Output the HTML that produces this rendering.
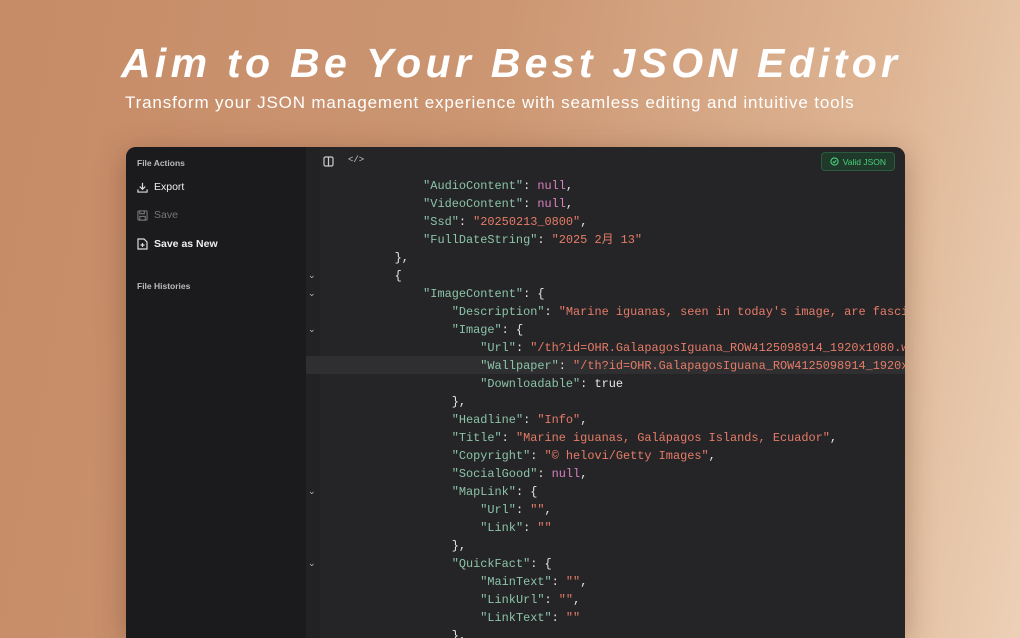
<!DOCTYPE html>
<html><head><meta charset="utf-8"><style>
*{margin:0;padding:0;box-sizing:border-box}
html{overflow:hidden;width:1020px;height:638px}
body{width:1020px;height:638px;overflow:hidden;position:relative;background:linear-gradient(100deg,#c68b67 0%,#cc9672 45%,#deb594 80%,#ecd0b6 100%);font-family:"Liberation Sans",sans-serif}
.title{position:absolute;left:121px;top:40px;font-size:41px;font-weight:bold;font-style:italic;color:#fff;letter-spacing:4.3px;white-space:nowrap}
.sub{position:absolute;left:125px;top:93px;font-size:17px;color:#fff;white-space:nowrap;letter-spacing:0.85px}
.win{position:absolute;left:126px;top:147px;width:779px;height:491px;border-radius:10px 10px 0 0;overflow:hidden;background:#252527;box-shadow:0 6px 30px rgba(80,40,20,.35)}
.side{position:absolute;left:0;top:0;width:180px;height:100%;background:#1b1b1d}
.side .h{position:absolute;left:11px;font-size:8.5px;color:#bbb;font-weight:bold}
.side .it{position:absolute;left:11px;font-size:10.5px;color:#eee;display:flex;align-items:center;gap:6px}
.ed{position:absolute;left:180px;top:0;right:0;bottom:0;background:#252527}
.gut{position:absolute;left:0;top:0;width:14px;height:100%;background:#222224}
.hl{position:absolute;left:0;right:0;top:209px;height:18px;background:#2f2f31}
.code{position:absolute;left:3px;top:1px;font-family:"Liberation Mono","Noto Sans CJK SC",monospace;font-size:11.9px;color:#e6e6e6;white-space:pre}
.l{position:absolute;left:0;height:18px;line-height:18px}
.k{color:#8cc4a8}.s{color:#e67c68}.n{color:#d980be}
.chev{position:absolute;left:2px;font-size:9px;color:#bbb}
.valid{position:absolute;right:10px;top:5px;height:19px;padding:0 8px;border-radius:4px;background:#1f3a2b;border:1px solid #2e5a3e;color:#4ad07a;font-size:8.5px;display:flex;align-items:center;gap:4px}
</style></head><body>
<div class="title">Aim to Be Your Best JSON Editor</div>
<div class="sub">Transform your JSON management experience with seamless editing and intuitive tools</div>
<div class="win">
 <div class="side">
  <div class="h" style="top:11px">File Actions</div>
  <div class="it" style="top:34px"><svg width="11" height="11" viewBox="0 0 12 12" fill="none" stroke="#ddd" stroke-width="1.3"><path d="M6 1v7M3 5l3 3 3-3M1 8v3h10V8"/></svg>Export</div>
  <div class="it" style="top:62px;color:#777"><svg width="11" height="11" viewBox="0 0 12 12" fill="none" stroke="#777" stroke-width="1.2"><rect x="1" y="1" width="10" height="10" rx="1"/><rect x="3" y="7" width="6" height="4"/><path d="M3 1v3h5V1"/></svg>Save</div>
  <div class="it" style="top:91px;font-weight:bold"><svg width="11" height="12" viewBox="0 0 11 12" fill="none" stroke="#ddd" stroke-width="1.2"><path d="M1 1h6l3 3v7H1z"/><path d="M5.5 5v4M3.5 7h4"/></svg>Save as New</div>
  <div class="h" style="top:134px">File Histories</div>
 </div>
 <div class="ed">
  <div class="gut"></div>
  <div class="hl"></div>
  <svg style="position:absolute;left:17px;top:9px" width="11" height="11" viewBox="0 0 11 11" fill="none" stroke="#ccc" stroke-width="1.2"><rect x="1" y="1" width="9" height="9" rx="1.5"/><path d="M5.5 1v9"/></svg>
  <div style="position:absolute;left:42px;top:8px;font-size:9px;color:#ccc;font-family:'Liberation Mono',monospace">&lt;/&gt;</div>
  <div class="valid"><svg width="9" height="9" viewBox="0 0 10 10" fill="none" stroke="#4ad07a" stroke-width="1.2"><circle cx="5" cy="5" r="4"/><path d="M3.2 5.2l1.3 1.2 2.3-2.6"/></svg>Valid JSON</div>
  <div class="chev" style="top:123px">⌄</div>
  <div class="chev" style="top:141px">⌄</div>
  <div class="chev" style="top:177px">⌄</div>
  <div class="chev" style="top:339px">⌄</div>
  <div class="chev" style="top:411px">⌄</div>
  <div class="code">
<div class="l" style="top:29px">                <span class="k">"AudioContent"</span>: <span class="n">null</span>,</div>
<div class="l" style="top:47px">                <span class="k">"VideoContent"</span>: <span class="n">null</span>,</div>
<div class="l" style="top:65px">                <span class="k">"Ssd"</span>: <span class="s">"20250213_0800"</span>,</div>
<div class="l" style="top:83px">                <span class="k">"FullDateString"</span>: <span class="s">"2025 2月 13"</span></div>
<div class="l" style="top:101px">            },</div>
<div class="l" style="top:119px">            {</div>
<div class="l" style="top:137px">                <span class="k">"ImageContent"</span>: {</div>
<div class="l" style="top:155px">                    <span class="k">"Description"</span>: <span class="s">"Marine iguanas, seen in today's image, are fascinating</span></div>
<div class="l" style="top:173px">                    <span class="k">"Image"</span>: {</div>
<div class="l" style="top:191px">                        <span class="k">"Url"</span>: <span class="s">"/th?id=OHR.GalapagosIguana_ROW4125098914_1920x1080.webp</span></div>
<div class="l" style="top:209px">                        <span class="k">"Wallpaper"</span>: <span class="s">"/th?id=OHR.GalapagosIguana_ROW4125098914_1920x1080</span></div>
<div class="l" style="top:227px">                        <span class="k">"Downloadable"</span>: true</div>
<div class="l" style="top:245px">                    },</div>
<div class="l" style="top:263px">                    <span class="k">"Headline"</span>: <span class="s">"Info"</span>,</div>
<div class="l" style="top:281px">                    <span class="k">"Title"</span>: <span class="s">"Marine iguanas, Galápagos Islands, Ecuador"</span>,</div>
<div class="l" style="top:299px">                    <span class="k">"Copyright"</span>: <span class="s">"© helovi/Getty Images"</span>,</div>
<div class="l" style="top:317px">                    <span class="k">"SocialGood"</span>: <span class="n">null</span>,</div>
<div class="l" style="top:335px">                    <span class="k">"MapLink"</span>: {</div>
<div class="l" style="top:353px">                        <span class="k">"Url"</span>: <span class="s">""</span>,</div>
<div class="l" style="top:371px">                        <span class="k">"Link"</span>: <span class="s">""</span></div>
<div class="l" style="top:389px">                    },</div>
<div class="l" style="top:407px">                    <span class="k">"QuickFact"</span>: {</div>
<div class="l" style="top:425px">                        <span class="k">"MainText"</span>: <span class="s">""</span>,</div>
<div class="l" style="top:443px">                        <span class="k">"LinkUrl"</span>: <span class="s">""</span>,</div>
<div class="l" style="top:461px">                        <span class="k">"LinkText"</span>: <span class="s">""</span></div>
<div class="l" style="top:479px">                    },</div>
  </div>
 </div>
</div>
</body></html>
